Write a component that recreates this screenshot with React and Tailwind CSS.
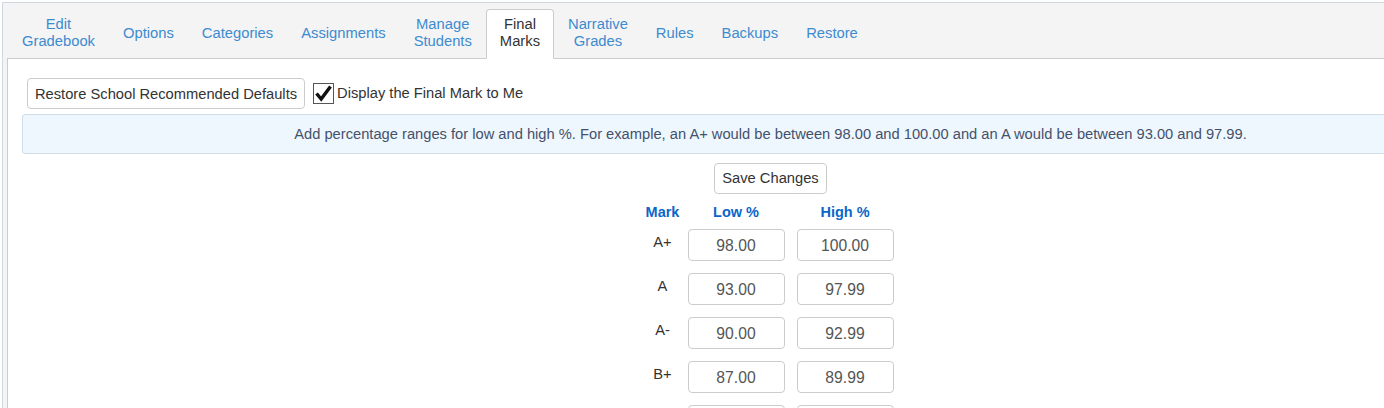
import React from "react";

const tabs = [
  ["Edit", "Gradebook"],
  ["Options"],
  ["Categories"],
  ["Assignments"],
  ["Manage", "Students"],
  ["Final", "Marks"],
  ["Narrative", "Grades"],
  ["Rules"],
  ["Backups"],
  ["Restore"],
];

const rows = [
  ["A+", "98.00", "100.00"],
  ["A", "93.00", "97.99"],
  ["A-", "90.00", "92.99"],
  ["B+", "87.00", "89.99"],
  ["B", "83.00", "86.99"],
  ["B-", "80.00", "82.99"],
];

export default function App() {
  return (
    <div
      className="w-[1384px] h-[408px] overflow-hidden bg-white pt-[2px] pl-[2px]"
      style={{ fontFamily: '"Liberation Sans", Arial, sans-serif' }}
    >
      <div className="w-[1560px] border-t border-l border-[#cfd7e0] bg-[#f4f4f4] pl-[4px] h-[500px]">
        <div className="flex pl-[1px] pt-[6px] -mb-px relative z-10">
          {tabs.map((t, i) => {
            const active = i === 5;
            return (
              <div
                key={i}
                className={
                  "h-[50px] flex flex-col justify-center items-center px-[13px] pb-[2px] border text-[14.75px] leading-[17px] " +
                  (active
                    ? "bg-white border-[#cccccc] border-b-white rounded-t-[4px] text-[#333333]"
                    : "border-transparent text-[#3d8bd0]")
                }
              >
                {t.map((l, j) => (
                  <span key={j}>{l}</span>
                ))}
              </div>
            );
          })}
        </div>
        <div className="bg-white border-t border-l border-[#cccccc] px-[14px] pt-[19px] h-[400px] text-[#333333] text-[14.7px]">
          <div className="flex items-center ml-[5px]">
            <button className="h-[31px] px-[7px] border border-[#cccccc] rounded-[4px] bg-white text-[#333333] leading-[18px]">
              Restore School Recommended Defaults
            </button>
            <div className="flex items-center ml-[8px]">
              <svg width="21" height="21" viewBox="0 0 21 21" className="block">
                <rect x="0.5" y="0.5" width="20" height="20" fill="white" stroke="#555555" />
                <path d="M3.5 10.5 L8.2 16 L17.5 3.5" fill="none" stroke="#111111" strokeWidth="3.4" strokeLinecap="butt" strokeLinejoin="miter" />
              </svg>
              <span className="ml-[3px]">Display the Final Mark to Me</span>
            </div>
          </div>
          <div className="mt-[5px] h-[40px] w-[1497px] border border-[#cfdde9] rounded-[3px] bg-[#eff7fe] flex items-center justify-center text-[#44516b]">
            Add percentage ranges for low and high %. For example, an A+ would be between 98.00 and 100.00 and an A would be between 93.00 and 97.99.
          </div>
          <div className="w-[1497px] flex flex-col items-center">
            <button className="mt-[9px] h-[31px] px-[7px] border border-[#cccccc] rounded-[4px] bg-white text-[#333333]">
              Save Changes
            </button>
            <div className="mt-[9px] pr-[2px] flex flex-col gap-[12px]">
              <div className="flex font-bold text-[#0b66c9] text-[14.5px] leading-[18px]">
                <div className="w-[34px] text-center">Mark</div>
                <div className="ml-[8px] w-[97px] text-center">Low %</div>
                <div className="ml-[12px] w-[97px] text-center">High %</div>
              </div>
              {rows.map((r, i) => (
                <div key={i} className={"flex items-start" + (i === 0 ? " -mt-[4px]" : "")}>
                  <div className="w-[34px] text-center pt-[4px] leading-[18px]">{r[0]}</div>
                  <div className="ml-[8px] w-[97px] h-[32px] border border-[#cccccc] rounded-[4px] flex items-center justify-center pt-[2px] text-[15.7px] text-[#555555]">
                    {r[1]}
                  </div>
                  <div className="ml-[12px] w-[97px] h-[32px] border border-[#cccccc] rounded-[4px] flex items-center justify-center pt-[2px] text-[15.7px] text-[#555555]">
                    {r[2]}
                  </div>
                </div>
              ))}
            </div>
          </div>
        </div>
      </div>
    </div>
  );
}
